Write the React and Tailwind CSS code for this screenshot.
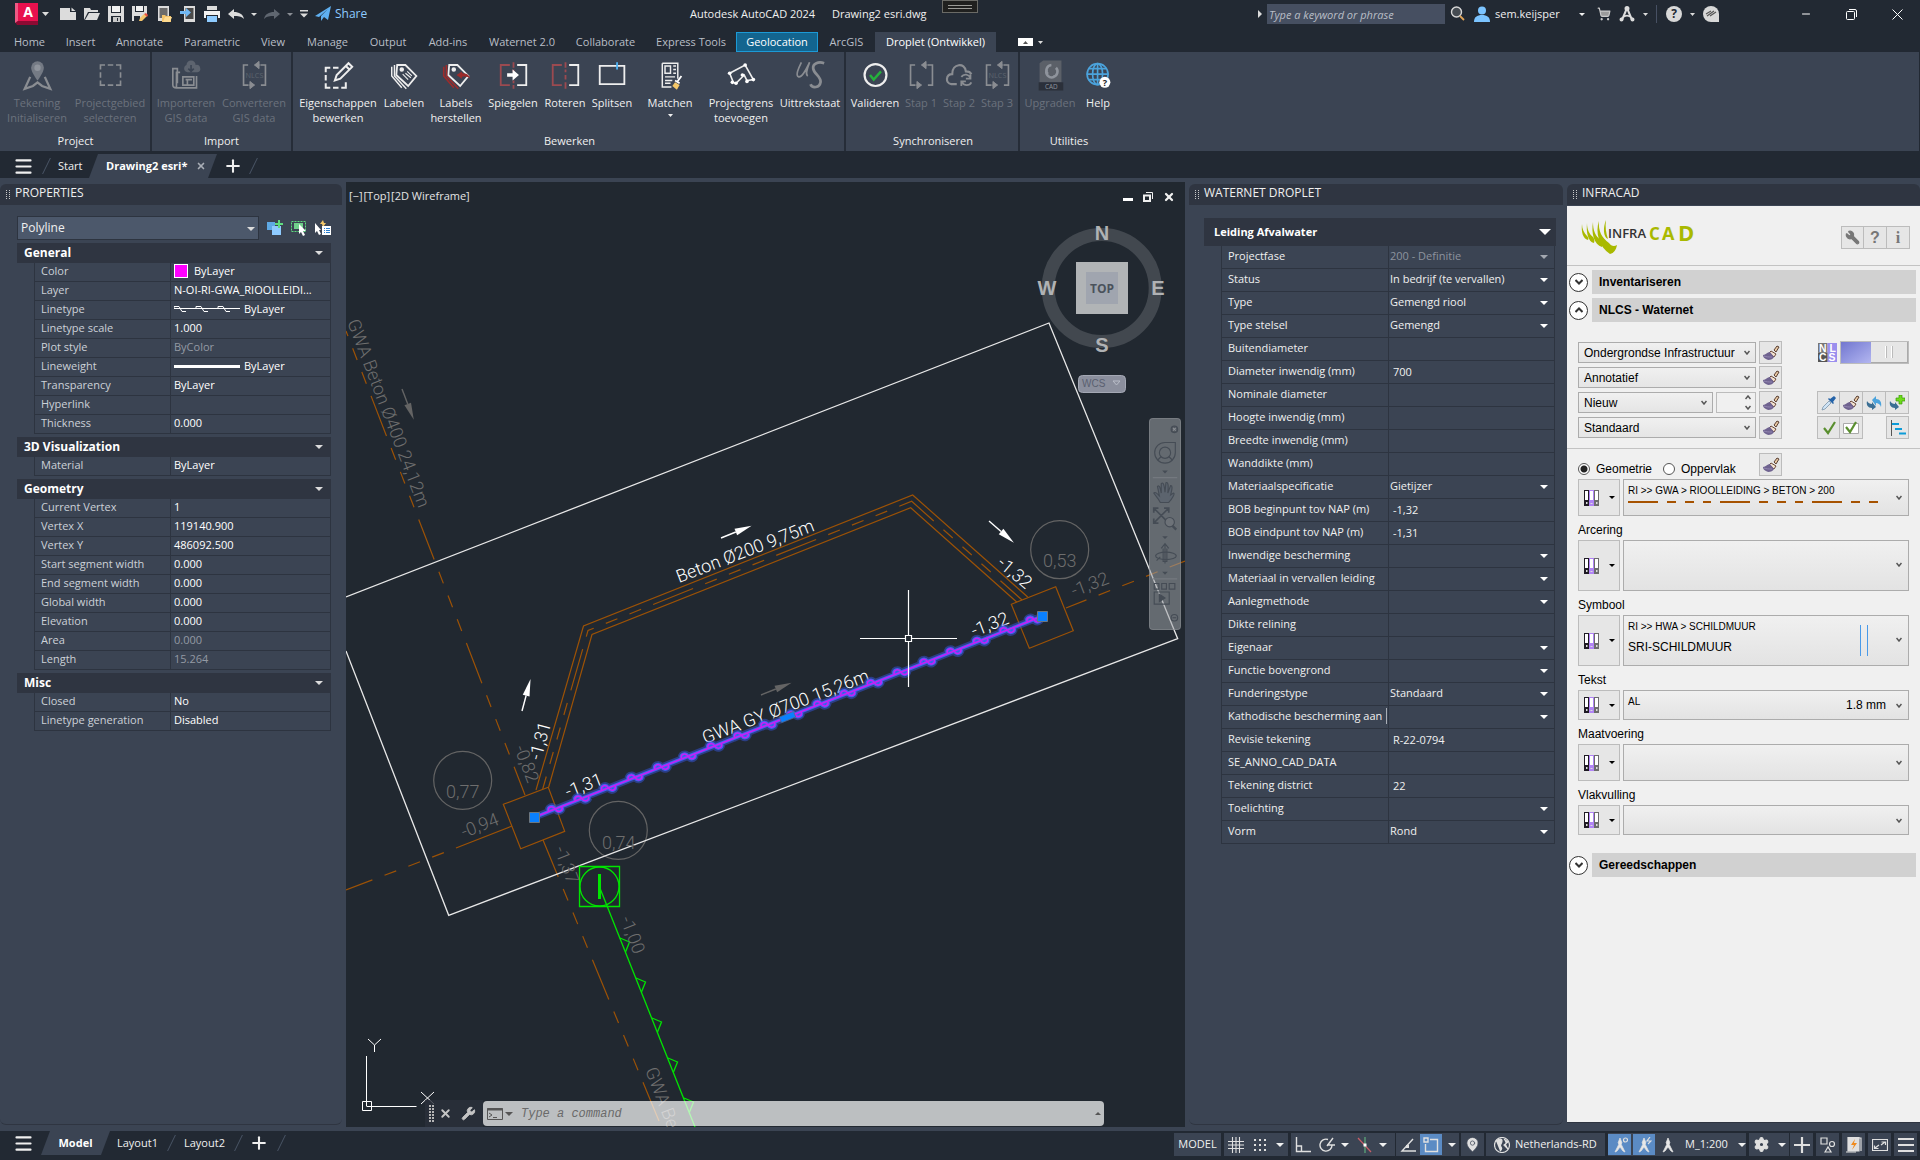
import { useState } from 'react'
import { Menu, Plus, X, Minus, Wrench, MapPin, Settings, ShoppingCart } from 'lucide-react'

const TABS = [
  { label: 'Home', w: 'w-[53px]' },
  { label: 'Insert', w: 'w-[49px]' },
  { label: 'Annotate', w: 'w-[69px]' },
  { label: 'Parametric', w: 'w-[76px]' },
  { label: 'View', w: 'w-[46px]' },
  { label: 'Manage', w: 'w-[63px]' },
  { label: 'Output', w: 'w-[58px]' },
  { label: 'Add-ins', w: 'w-[62px]' },
  { label: 'Waternet 2.0', w: 'w-[86px]' },
  { label: 'Collaborate', w: 'w-[81px]' },
  { label: 'Express Tools', w: 'w-[90px]' },
  { label: 'Geolocation', w: 'w-[82px]' },
  { label: 'ArcGIS', w: 'w-[57px]' },
  { label: 'Droplet (Ontwikkel)', w: 'w-[121px]' },
]

const PROPERTY_GROUPS = [
  {
    title: 'General',
    rows: [
      { name: 'Color', value: 'ByLayer', kind: 'color' },
      { name: 'Layer', value: 'N-OI-RI-GWA_RIOOLLEIDI...' },
      { name: 'Linetype', value: 'ByLayer', kind: 'linetype' },
      { name: 'Linetype scale', value: '1.000' },
      { name: 'Plot style', value: 'ByColor', muted: true },
      { name: 'Lineweight', value: 'ByLayer', kind: 'weight' },
      { name: 'Transparency', value: 'ByLayer' },
      { name: 'Hyperlink', value: '' },
      { name: 'Thickness', value: '0.000' },
    ],
  },
  { title: '3D Visualization', rows: [{ name: 'Material', value: 'ByLayer' }] },
  {
    title: 'Geometry',
    rows: [
      { name: 'Current Vertex', value: '1' },
      { name: 'Vertex X', value: '119140.900' },
      { name: 'Vertex Y', value: '486092.500' },
      { name: 'Start segment width', value: '0.000' },
      { name: 'End segment width', value: '0.000' },
      { name: 'Global width', value: '0.000' },
      { name: 'Elevation', value: '0.000' },
      { name: 'Area', value: '0.000', muted: true },
      { name: 'Length', value: '15.264', muted: true },
    ],
  },
  {
    title: 'Misc',
    rows: [
      { name: 'Closed', value: 'No' },
      { name: 'Linetype generation', value: 'Disabled' },
    ],
  },
]

const DROPLET_ROWS = [
  { name: 'Projectfase', value: '200 - Definitie', select: true, muted: true },
  { name: 'Status', value: 'In bedrijf (te vervallen)', select: true },
  { name: 'Type', value: 'Gemengd riool', select: true },
  { name: 'Type stelsel', value: 'Gemengd', select: true },
  { name: 'Buitendiameter', value: '' },
  { name: 'Diameter inwendig (mm)', value: '700' },
  { name: 'Nominale diameter', value: '' },
  { name: 'Hoogte inwendig (mm)', value: '' },
  { name: 'Breedte inwendig (mm)', value: '' },
  { name: 'Wanddikte (mm)', value: '' },
  { name: 'Materiaalspecificatie', value: 'Gietijzer', select: true },
  { name: 'BOB beginpunt tov NAP (m)', value: '-1,32' },
  { name: 'BOB eindpunt tov NAP (m)', value: '-1,31' },
  { name: 'Inwendige bescherming', value: '', select: true },
  { name: 'Materiaal in vervallen leiding', value: '', select: true },
  { name: 'Aanlegmethode', value: '', select: true },
  { name: 'Dikte relining', value: '' },
  { name: 'Eigenaar', value: '', select: true },
  { name: 'Functie bovengrond', value: '', select: true },
  { name: 'Funderingstype', value: 'Standaard', select: true },
  { name: 'Kathodische bescherming aan', value: '', select: true, cut: true },
  { name: 'Revisie tekening', value: 'R-22-0794' },
  { name: 'SE_ANNO_CAD_DATA', value: '' },
  { name: 'Tekening district', value: '22' },
  { name: 'Toelichting', value: '', select: true },
  { name: 'Vorm', value: 'Rond', select: true },
]

function Caret({ className = 'w-[7px] h-1' }) {
  return (
    <svg viewBox="0 0 8 4" preserveAspectRatio="none" className={`flex-shrink-0 ${className}`}>
      <path d="M0 0h8L4 4z" fill="currentColor" />
    </svg>
  )
}

function Slash() {
  return <span className="h-4 w-0 border-l border-[#4a5566] -skew-x-[26deg]" />
}

/* ---------- Title bar ---------- */

function QuickIcon({ label, children, className = 'w-6' }) {
  return (
    <button type="button" aria-label={label} className={`h-6 flex items-center justify-center ${className}`}>
      <svg viewBox="0 0 16 16" className="w-4 h-4" fill="#dcdcdc">{children}</svg>
    </button>
  )
}

function TitleBar() {
  return (
    <header className="h-8 flex items-center justify-between relative pb-1">
      <div className="flex items-center pl-[15px]">
        <button type="button" aria-label="Application menu" className="flex items-center">
          <svg viewBox="0 0 24 22" className="w-6 h-[22px]">
            <path d="M0 0h23v22H2l-2-3z" fill="#8d0a33" />
            <path d="M0 0h4v17l-4 3z" fill="#ee5a85" />
            <path d="M3 0h20v18H3z" fill="#e8114e" />
            <text x="13" y="14" textAnchor="middle" fontSize="14" fontWeight="700" fill="#fff" fontFamily="Open Sans, sans-serif">A</text>
          </svg>
          <Caret className="w-[7px] h-1 ml-[3px] text-[#dcdcdc]" />
        </button>
        <div className="flex items-center ml-[7px]">
          <QuickIcon label="New"><path d="M0 2h10v4h6v8H0z" /><path d="M11.500 1.500l4 3.500h-4z" /></QuickIcon>
          <QuickIcon label="Open"><path d="M0 14V2h6l1 2h7v2H4z" /><path d="M5 7h11l-3 7H1z" /></QuickIcon>
          <QuickIcon label="Save">
            <path d="M0 0h3v7h10V0h3v16H0z" /><path d="M4 0h8v6H4z" fill="#f2f2f2" />
            <path d="M3 10h10v6H3z" fill="#222933" /><path d="M5 11h7v5H5zM9 12v3h1v-3z" fill="#c8c8c8" />
          </QuickIcon>
          <QuickIcon label="Save as">
            <path d="M0 0h3v6h9V0h3v8l-8 7H0z" /><path d="M4 0h7v5H4z" fill="#f2f2f2" /><path d="M2 10h6v5H2z" fill="#222933" />
            <path d="M7 15l1-3 4-4 3 2-5 5z" fill="#f4c46a" /><path d="M12 8l2-1 2 2-1 2z" fill="#e7503f" />
          </QuickIcon>
          <QuickIcon label="Open from web">
            <path d="M2 0h11v15H2z" /><path d="M3.500 2h8v10h-8z" fill="#6b6b6b" />
            <path d="M6 9h3l1 1h5v6H6z" fill="#f4c46a" /><path d="M9 11h7l-2 5H7z" fill="#ffdb90" />
          </QuickIcon>
          <QuickIcon label="Save to web">
            <path d="M4 0h11v16H4z" /><path d="M5.500 2h8v11h-8z" fill="#4a4a4a" />
            <path d="M0 5h6V2l5 4.500L6 11V8H0z" fill="#71b9f5" />
          </QuickIcon>
          <QuickIcon label="Plot">
            <path d="M3 0h10v4H3z" /><path d="M0 5h16v7h-2V9H2v3H0z" fill="#f2f2f2" /><path d="M3 10h10v6H3z" fill="#8ecbff" />
          </QuickIcon>
          <QuickIcon label="Undo"><path d="M0 8l6-5v3c5 0 9 2 10 7-3-3-6-3-10-3v3z" /></QuickIcon>
          <Caret className="w-[6px] h-[3px] mx-[3px] text-[#dcdcdc]" />
          <QuickIcon label="Redo"><path d="M16 8l-6-5v3C5 6 1 8 0 13c3-3 6-3 10-3v3z" fill="#5f6670" /></QuickIcon>
          <Caret className="w-[6px] h-[3px] ml-[3px] text-[#8b8f96]" />
          <button type="button" aria-label="Customize" className="ml-[7px] mr-[7px]">
            <svg viewBox="0 0 8 8" className="w-2 h-2" fill="#dcdcdc"><path d="M0 0h8v1.500H0zM0 3.500h8l-4 4z" /></svg>
          </button>
          <button type="button" className="flex items-center gap-1 text-[12px] text-[#8ecbff]">
            <svg viewBox="0 0 16 16" className="w-4 h-4" fill="#5fb0f2"><path d="M0 10L16 0l-3 14-4-3-3 4v-5L13 3 4 11z" /></svg>
            Share
          </button>
        </div>
      </div>

      <div className="absolute left-[690px] top-0 flex h-7 items-center text-[#f0f0f0]">
        <span className="w-[142px]">Autodesk AutoCAD 2024</span>
        <span>Drawing2 esri.dwg</span>
      </div>
      <div className="absolute left-[942px] top-0 w-9 h-[13px] bg-[#20201f] border border-[#6a6a66] flex flex-col items-center justify-center gap-[2px]">
        <span className="w-6 h-px bg-[#9b9b97]" />
        <span className="w-6 h-px bg-[#9b9b97]" />
      </div>

      <div className="flex items-center">
        <svg viewBox="0 0 4 8" className="w-1 h-2 mr-[5px]"><path d="M0 0l4 4-4 4z" fill="#dcdcdc" /></svg>
        <input
          aria-label="Search"
          placeholder="Type a keyword or phrase"
          className="w-[178px] h-5 bg-[#464f61] px-[2px] italic placeholder:text-[#b9bec6] outline-none"
        />
        <svg viewBox="0 0 16 16" className="w-4 h-4 ml-[5px] mr-2" fill="none">
          <circle cx="6.500" cy="6" r="5" fill="#454b52" stroke="#d8d8d8" strokeWidth="1.400" />
          <path d="M10 10l4 4" stroke="#e0a458" strokeWidth="1.800" />
        </svg>
        <button type="button" className="flex items-center text-[#f0f0f0]">
          <svg viewBox="0 0 16 16" className="w-4 h-4 mr-[5px]" fill="#7cc4ff"><circle cx="8" cy="4.500" r="4" /><path d="M0 16c0-5 3-7 8-7s8 2 8 7z" /></svg>
          <span className="w-[84px] text-left">sem.keijsper</span>
          <Caret className="w-[6px] h-[3px]" />
        </button>
        <button type="button" aria-label="App store" className="ml-3 text-[#c9c9c9]"><ShoppingCart size={14} strokeWidth={2} fill="#9b9b9b" /></button>
        <button type="button" aria-label="Autodesk app" className="ml-2 flex items-center gap-2">
          <svg viewBox="0 0 16 16" className="w-4 h-4" fill="none" stroke="#dcdcdc" strokeWidth="2"><path d="M8 2l5 12M8 2L3 14M3 12c3-3 7-3 10 0" /><circle cx="8" cy="2.500" r="1.500" fill="#dcdcdc" /><circle cx="2.500" cy="13.500" r="1" fill="#dcdcdc" /><circle cx="13.500" cy="13.500" r="1" fill="#dcdcdc" /></svg>
          <Caret className="w-[5px] h-[3px] text-[#dcdcdc]" />
        </button>
        <span className="w-px h-[18px] bg-[#475063] ml-2 mr-[9px]" />
        <button type="button" aria-label="Help" className="flex items-center gap-2">
          <span className="w-4 h-4 rounded-full bg-[#d8d8d8] text-[#222933] font-bold text-[12px] leading-4">?</span>
          <Caret className="w-[5px] h-[3px] text-[#dcdcdc]" />
        </button>
        <svg viewBox="0 0 16 16" className="w-4 h-4 ml-2 mr-[81px]"><path d="M8 0a8 8 0 0 1 8 8v8H8A8 8 0 0 1 8 0z" fill="#d8d8d8" /><path d="M3 8l5-3M4 10l7-5M7 10l6-4" stroke="#555" strokeWidth="1.200" /></svg>
        <button type="button" aria-label="Minimize" className="w-[46px] h-6 flex items-center text-white"><Minus size={12} strokeWidth={2} /></button>
        <button type="button" aria-label="Restore" className="w-[46px] h-6 flex items-center text-white">
          <svg viewBox="0 0 11 11" className="w-[11px] h-[11px]" fill="none" stroke="#fff"><rect x=".5" y="2.500" width="8" height="8" rx="1" /><path d="M3 .5h6a1.500 1.500 0 0 1 1.500 1.500v6" /></svg>
        </button>
        <button type="button" aria-label="Close" className="w-7 h-6 flex items-center text-white">
          <svg viewBox="0 0 11 11" className="w-[11px] h-[11px]" stroke="#fff"><path d="M.5.5l10 10M10.500.5l-10 10" /></svg>
        </button>
      </div>
    </header>
  )
}

/* ---------- Ribbon ---------- */

function RibbonTabs() {
  const [active, setActive] = useState('Droplet (Ontwikkel)')
  return (
    <nav className="h-5 flex items-stretch pl-[3px]">
      {TABS.map(({ label, w }) => {
        let tone = 'text-[#b9bec6]'
        if (label === 'Geolocation') tone = 'bg-[#13658f] border border-[#1c9ad6] text-white'
        if (label === active) tone = 'bg-[#3b4453] text-white'
        return (
          <button key={label} type="button" onClick={() => setActive(label)} className={`text-center leading-[18px] whitespace-nowrap ${w} ${tone}`}>
            {label}
          </button>
        )
      })}
      <button type="button" aria-label="Minimize ribbon" className="flex items-center gap-[5px] ml-[22px] text-[#dcdcdc]">
        <span className="w-[15px] h-2 bg-white flex items-center justify-center text-[#555]"><Caret className="w-[5px] h-[3px] rotate-180" /></span>
        <Caret className="w-[5px] h-[3px]" />
      </button>
    </nav>
  )
}

const SWAP_ARROWS = (
  <>
    <path d="M9 4H4v22h5M23 26h5V4h-5" />
    <path d="M23 4h-7M21 0l-5 4 5 4zM9 26h7M11 22l5 4-5 4z" fill="currentColor" strokeWidth="1" />
  </>
)

const ICONS = {
  pin: (
    <>
      <path d="M16 0a7 7 0 0 1 7 7c0 5-7 14-7 14S9 12 9 7a7 7 0 0 1 7-7z" fill="#747a84" stroke="none" />
      <circle cx="16" cy="7" r="3.500" fill="#8f949c" stroke="none" />
      <path d="M8 17L2 30l9-3 5-4 5 4 9 3-6-13" strokeWidth="2.500" />
    </>
  ),
  dashed: <path d="M5 9V4h5M13 4h6M22 4h5v5M27 12v6M27 21v5h-5M19 26h-6M10 26H5v-5M5 18v-6" />,
  importGis: (
    <>
      <path d="M9 12H5v17h22V16M5 29c-3 0-4-1-4-3V8h5v16M12 17h12v9H12zM15 20h7M17 20v6" />
      <path d="M15 11a4 4 0 0 1 1-7 5 5 0 0 1 10 0 4 4 0 0 1 2 8H17z" fill="#5d646f" stroke="none" />
      <path d="M21 4v6M18 8l3 3 3-3" stroke="#3b4453" />
    </>
  ),
  convert: <>{SWAP_ARROWS}<text x="16" y="18" textAnchor="middle" fontSize="8" stroke="none" fill="#5d646f">NLCS</text></>,
  edit: (
    <>
      <path d="M2 12V7h5M10 7h6M2 15v6M2 24v5h5M10 29h6M19 29h5v-6" strokeWidth="2.200" />
      <path d="M12 21l2-6L27 2l4 4-13 13zM24 5l4 4" strokeWidth="2.200" />
    </>
  ),
  tag: (
    <>
      <path d="M8 4h9l12 12-9 11L7 15z" strokeWidth="2" /><path d="M5 4v12l13 14M2 6v10l11 13" strokeWidth="1.600" />
      <circle cx="13" cy="9" r="1.600" fill="currentColor" /><path d="M14 14l6 6M17 13l6 5M19 11l5 5" strokeWidth="1.200" />
    </>
  ),
  tagRestore: (
    <>
      <path d="M8 4h9l12 12-9 11L7 15z" strokeWidth="2" /><path d="M5 4v12l13 14M2 6v10l11 13" stroke="#9d2b2b" strokeWidth="1.800" />
      <circle cx="13" cy="9" r="1.600" fill="currentColor" /><path d="M16 15l6-4v2c4 0 8 1 9 6-2-2-5-3-9-2v2z" fill="#9d2b2b" stroke="none" />
    </>
  ),
  mirror: (
    <>
      <path d="M12 4H2v22h10M16 1v6M16 9v3M16 21v3M16 26v4" stroke="#9b4a50" strokeWidth="2" />
      <path d="M20 4h10v22H20" strokeWidth="2" /><path d="M9 13h6v-4l7 6-7 6v-4H9z" fill="#fff" stroke="none" />
    </>
  ),
  rotate: (
    <>
      <path d="M12 4H2v22h10M16 1v6M16 9v3M16 15v5M16 23v7" stroke="#9b4a50" strokeWidth="2" /><path d="M20 4h10v22H20" strokeWidth="2" />
    </>
  ),
  split: <><path d="M2 5h27v20H2z" strokeWidth="2" /><path d="M21 1v8" stroke="#4fb3f5" strokeWidth="2" /></>,
  match: (
    <>
      <path d="M7 2h17v17M7 2v26h10M10 5h6v8h-6zM19 5h3M19 9h3M19 13h3M10 17h11M10 21h8M10 24h6" strokeWidth="1.600" />
      <path d="M28 16l-5 7M21 21l5 3" stroke="#fff" strokeWidth="2" /><path d="M18 27l3-4 5 3-3 5z" fill="#f5c869" stroke="none" />
    </>
  ),
  border: (
    <>
      <path d="M3 13L20 4l9 16-7 1-3-6-9 9-3-1z" strokeWidth="1.800" />
      <g fill="#fff" stroke="none"><circle cx="3" cy="13" r="2" /><circle cx="20" cy="4" r="2" /><circle cx="29" cy="20" r="2" /><circle cx="22" cy="22" r="2" /><circle cx="17" cy="15" r="2" /><circle cx="10" cy="24" r="2" /><circle cx="6" cy="23" r="2" /></g>
    </>
  ),
  us: (
    <g strokeWidth="2.400">
      <path d="M6 1c-3 6-7 15-3 16s8-8 12-16c-3 8-5 13-2 15" strokeWidth="1.800" />
      <path d="M31 2c-6-2-13 0-12 6s9 9 8 15-9 7-11 2" strokeWidth="3" />
    </g>
  ),
  check: <><circle cx="16" cy="15" r="12" strokeWidth="2.400" /><path d="M10 15l4 5 8-9" stroke="#25b13c" strokeWidth="2.600" /></>,
  swap: SWAP_ARROWS,
  cloud: (
    <>
      <path d="M13 25H7c-7-1-6-11 1-11C8 2 22 1 23 11c3 0 5 1 6 3" strokeWidth="2.400" />
      <path d="M18 17c3-4 8-3 10 1M28 14v5h-5M29 23c-2 4-8 4-10 0M18 27v-5h5" strokeWidth="2" />
    </>
  ),
  cad: (
    <>
      <path d="M4 2l4-3h20v24H4z" fill="#5b6068" stroke="none" /><path d="M3 23h27v9H3z" fill="#2b303a" stroke="none" />
      <path d="M13 14a6 6 0 0 1 4-10M22 7a6 6 0 0 1-3 10M12 9a6 6 0 0 0 8 8" stroke="#8f949c" strokeWidth="2.800" />
      <text x="17" y="30" textAnchor="middle" fontSize="7" stroke="none" fill="#8f949c">CAD</text>
    </>
  ),
  globe: (
    <>
      <g stroke="#4ba3dc" strokeWidth="1.800"><circle cx="15" cy="14" r="11.500" /><ellipse cx="15" cy="14" rx="5.500" ry="11.500" /><path d="M15 2v24M3 14h24M5 8h20M5 20h20" /></g>
      <circle cx="23" cy="23" r="6" fill="#fff" stroke="none" /><text x="23" y="27" textAnchor="middle" fontSize="10" fontWeight="700" stroke="none" fill="#222">?</text>
    </>
  ),
}

const RIBBON_PANELS = [
  {
    title: 'Project', w: 'w-[152px] pl-px',
    items: [
      { icon: 'pin', lines: ['Tekening', 'Initialiseren'], w: 'w-[72px]', off: true },
      { icon: 'dashed', lines: ['Projectgebied', 'selecteren'], w: 'w-[74px]', off: true },
    ],
  },
  {
    title: 'Import', w: 'w-[141px]',
    items: [
      { icon: 'importGis', lines: ['Importeren', 'GIS data'], w: 'w-[68px]', off: true },
      { icon: 'convert', lines: ['Converteren', 'GIS data'], w: 'w-[68px]', off: true },
    ],
  },
  {
    title: 'Bewerken', w: 'w-[553px] pl-[2px]',
    items: [
      { icon: 'edit', lines: ['Eigenschappen', 'bewerken'], w: 'w-[86px]' },
      { icon: 'tag', lines: ['Labelen'], w: 'w-[46px]' },
      { icon: 'tagRestore', lines: ['Labels', 'herstellen'], w: 'w-[58px]' },
      { icon: 'mirror', lines: ['Spiegelen'], w: 'w-[56px]' },
      { icon: 'rotate', lines: ['Roteren'], w: 'w-[48px]' },
      { icon: 'split', lines: ['Splitsen'], w: 'w-[46px]' },
      { icon: 'match', lines: ['Matchen'], w: 'w-[70px]', menu: true },
      { icon: 'border', lines: ['Projectgrens', 'toevoegen'], w: 'w-[72px]' },
      { icon: 'us', lines: ['Uittrekstaat'], w: 'w-[66px]', grey: true },
    ],
  },
  {
    title: 'Synchroniseren', w: 'w-[174px] pl-[2px]',
    items: [
      { icon: 'check', lines: ['Valideren'], w: 'w-[54px]' },
      { icon: 'swap', lines: ['Stap 1'], w: 'w-[38px]', off: true },
      { icon: 'cloud', lines: ['Stap 2'], w: 'w-[38px]', off: true },
      { icon: 'convert', lines: ['Stap 3'], w: 'w-[38px]', off: true },
    ],
  },
  {
    title: 'Utilities', w: 'w-[98px]',
    items: [
      { icon: 'cad', lines: ['Upgraden'], w: 'w-[60px]', off: true },
      { icon: 'globe', lines: ['Help'], w: 'w-9' },
    ],
  },
]

function Ribbon() {
  return (
    <div className="h-[99px] bg-[#3b4453] flex mr-px">
      {RIBBON_PANELS.map((panel, i) => (
        <section key={panel.title} className={`flex flex-col ${panel.w} ${i < 4 ? 'border-r-2 border-[#262d38]' : ''}`}>
          <div className="flex pt-2 h-20">
            {panel.items.map((item) => (
              <button
                key={item.lines[0]}
                type="button"
                disabled={item.off}
                className={`flex flex-col items-center flex-shrink-0 whitespace-nowrap leading-[15px] ${item.w} ${item.off ? 'text-[#6b727d]' : 'text-[#f0f0f0]'}`}
              >
                <svg viewBox="-1 -1 34 33" className={`w-[31px] h-[31px] mb-1 flex-shrink-0 overflow-visible ${item.off || item.grey ? 'text-[#8a8d92]' : 'text-[#eeeeee]'}`} fill="none" stroke="currentColor" strokeWidth="1.800">
                  {ICONS[item.icon]}
                </svg>
                {item.lines.map((line) => <span key={line}>{line}</span>)}
                {item.menu && <Caret className="w-[5px] h-[3px] mt-1" />}
              </button>
            ))}
          </div>
          <h2 className="text-center leading-[18px] text-[#f0f0f0]">{panel.title}</h2>
        </section>
      ))}
    </div>
  )
}

function FileTabs() {
  return (
    <div className="h-[27px] flex items-center pt-[3px] text-[#f0f0f0]">
      <button type="button" aria-label="Menu" className="ml-[13px]"><Menu size={21} strokeWidth={2.500} /></button>
      <span className="ml-3 flex"><Slash /></span>
      <a href="#start" className="ml-[11px] w-[31px]">Start</a>
      <div className="h-6 w-[128px] bg-[#3b4453] flex items-center pl-[17px] [clip-path:polygon(9px_0,100%_0,calc(100%_-_9px)_100%,0_100%)]">
        <span className="font-bold text-white w-[90px] whitespace-nowrap">Drawing2 esri*</span>
        <button type="button" aria-label="Close tab" className="text-[#a9aeb6]"><X size={10} strokeWidth={4} /></button>
      </div>
      <button type="button" aria-label="New drawing" className="ml-[6px]"><Plus size={20} strokeWidth={2.500} /></button>
      <span className="ml-[10px] flex"><Slash /></span>
    </div>
  )
}

/* ---------- Palettes ---------- */

function PaletteTitle({ children }) {
  return (
    <h2 className="h-[21px] bg-[#2f3541] rounded-t-md flex items-center gap-[5px] pl-[6px] pb-[3px] text-[#f0f0f0] text-[12px]">
      <svg viewBox="0 0 4 10" className="w-1 h-[10px] mt-1" fill="#c9c9c9">
        {[0, 2, 4, 6, 8].map((y) => <path key={y} d={`M0 ${y}h1v1H0zM3 ${y}h1v1H3z`} />)}
      </svg>
      {children}
    </h2>
  )
}

function PropertyValue({ row }) {
  if (row.kind === 'color') {
    return (
      <span className="flex items-center gap-[6px]">
        <span className="w-[14px] h-[14px] bg-[#ff00ff] border border-white" />
        {row.value}
      </span>
    )
  }
  if (row.kind === 'linetype') {
    return (
      <span className="flex items-center gap-1">
        <svg viewBox="0 0 66 8" className="w-[66px] h-2" fill="none" stroke="#fff">
          <path d="M0 3.500h66" />
          {[0, 22, 44].map((x) => <path key={x} d={`M${x} 3v-1.500h5l3 5h4`} />)}
        </svg>
        {row.value}
      </span>
    )
  }
  if (row.kind === 'weight') {
    return <span className="flex items-center gap-1"><span className="w-[66px] h-[3px] bg-white" />{row.value}</span>
  }
  return row.value
}

function PropertiesPalette() {
  return (
    <aside className="w-[342px] flex-shrink-0 pt-[6px] pb-[6px] flex flex-col">
      <PaletteTitle>PROPERTIES</PaletteTitle>
      <div className="flex-1 pl-[17px] pr-[11px] pt-[11px] border-b border-[#2f3541] rounded-b-md">
        <div className="flex items-center h-6 mb-[3px]">
          <div className="relative w-[242px] h-6">
            <select aria-label="Object type" className="appearance-none w-full h-full bg-[#4c586b] border border-[#2d3440] pl-[3px] text-[#f0f0f0] text-[12px]">
              <option>Polyline</option>
            </select>
            <Caret className="w-2 h-1 absolute right-1 top-[11px] text-[#dcdcdc] pointer-events-none" />
          </div>
          <button type="button" aria-label="Toggle PICKADD" className="ml-2">
            <svg viewBox="0 0 16 16" className="w-4 h-4"><path d="M0 2h8v8H0z" fill="#5ea9e4" /><path d="M5 6h9v9H5z" fill="#8ecbff" /><path d="M11 0h2v3h3v2h-3v3h-2V5H8V3h3z" fill="#5fdc7f" /></svg>
          </button>
          <button type="button" aria-label="Select objects" className="ml-2">
            <svg viewBox="0 0 16 16" className="w-4 h-4"><path d="M.5 1.500h14v10H.5z" fill="none" stroke="#5fdc7f" strokeDasharray="2 1" /><path d="M3 3h9v6H3z" fill="#6fd08a" /><path d="M8 4l7 7h-3l2 4-2 1-2-4-2 2z" fill="#fff" /></svg>
          </button>
          <button type="button" aria-label="Quick select" className="ml-2">
            <svg viewBox="0 0 16 16" className="w-4 h-4"><path d="M0 3l6 7H4l2 4-2 1-2-4-2 2z" fill="#fff" /><path d="M8 0l1 3 2 0-3 4-1-3H5z" fill="#f5c869" /><path d="M7 6h9v9H7z" fill="#fff" /><path d="M9 8.500h1M11 8.500h4M9 10.500h1M11 10.500h4M9 12.500h1M11 12.500h4" stroke="#2b7fd0" /></svg>
          </button>
        </div>

        {PROPERTY_GROUPS.map((group) => (
          <section key={group.title} className="mb-[3px]">
            <button type="button" className="w-full h-5 bg-[#2f3541] flex items-center justify-between pl-[7px] pr-2 font-bold text-white text-[12px]">
              {group.title}
              <Caret className="w-2 h-1 text-[#dcdcdc]" />
            </button>
            <table className="w-[297px] ml-[17px] border-separate border-spacing-0 table-fixed border-l border-[#2d3440]">
              <tbody>
                {group.rows.map((row) => (
                  <tr key={row.name} className="h-[19px] leading-4">
                    <th scope="row" className="w-[136px] border-r border-b border-[#2d3440] p-0 pl-[6px] pb-[2px] text-left font-normal text-[#ccd1d8] whitespace-nowrap">{row.name}</th>
                    <td className={`border-r border-b border-[#2d3440] p-0 pl-[3px] pb-[2px] whitespace-nowrap overflow-hidden ${row.muted ? 'text-[#949aa4]' : 'text-white'}`}><PropertyValue row={row} /></td>
                  </tr>
                ))}
              </tbody>
            </table>
          </section>
        ))}
      </div>
    </aside>
  )
}

function DropletPalette() {
  return (
    <aside className="w-[374px] flex-shrink-0 ml-1 pt-[6px] pb-[6px] flex flex-col">
      <PaletteTitle>WATERNET DROPLET</PaletteTitle>
      <div className="flex-1 pt-[13px] pl-[15px] pr-[7px] border-b border-[#2f3541] rounded-b-md">
        <button type="button" className="w-full h-7 bg-[#2f3541] flex items-center justify-between pl-[10px] pr-[5px] font-bold text-white">
          Leiding Afvalwater
          <Caret className="w-3 h-[6px]" />
        </button>
        <table className="w-[334px] ml-[17px] border-separate border-spacing-0 table-fixed border-l border-[#2d3440]">
          <tbody>
            {DROPLET_ROWS.map((row, i) => (
              <tr key={row.name} className="h-[23px] leading-4">
                <th scope="row" className="w-[167px] border-r border-b border-[#2d3440] p-0 pl-[6px] pb-[2px] text-left font-normal text-[#f0f0f0] whitespace-nowrap">
                  <label htmlFor={`droplet-${i}`} className={row.cut ? 'block overflow-hidden w-[159px] border-r border-[#a9aeb6]' : ''}>{row.name}</label>
                </th>
                <td className="border-r border-b border-[#2d3440] p-0 pb-[2px]">
                  {row.select ? (
                    <div className="relative">
                      <select id={`droplet-${i}`} disabled={row.muted} className={`appearance-none block w-full h-5 bg-transparent pl-px opacity-100 ${row.muted ? 'text-[#8d939e]' : 'text-[#f0f0f0]'}`}>
                        <option>{row.value}</option>
                      </select>
                      <Caret className={`w-2 h-1 absolute right-[6px] top-[9px] pointer-events-none ${row.muted ? 'text-[#a3a8b0]' : 'text-white'}`} />
                    </div>
                  ) : (
                    <input id={`droplet-${i}`} defaultValue={row.value} className="block w-full h-5 bg-transparent pl-1 text-[#f0f0f0] outline-none" />
                  )}
                </td>
              </tr>
            ))}
          </tbody>
        </table>
      </div>
    </aside>
  )
}

/* ---------- InfraCAD palette ---------- */

function Brush() {
  return (
    <svg viewBox="0 0 18 16" className="w-[18px] h-4">
      <path d="M12 5l3-4 2 1-3 5z" fill="#e9c9a4" stroke="#5a4034" />
      <path d="M9 6l5 3-2 3-5-4z" fill="#f3e2cf" stroke="#6b4a3b" />
      <path d="M8 7l4 5c-1 2-3 3-6 3-2-1-5-2-5-5 3 0 4-3 7-3z" fill="#6f6390" />
      <path d="M2 11c2 1 5 1 8 1" stroke="#9488b3" fill="none" />
    </svg>
  )
}

function ToolButton({ label, children, className = '' }) {
  return (
    <button type="button" aria-label={label} className={`w-[23px] h-[23px] flex-shrink-0 bg-[#e6e6e6] border border-[#bcbcbc] flex items-center justify-center ${className}`}>
      {children}
    </button>
  )
}

function Chevron({ className = '' }) {
  return (
    <svg viewBox="0 0 6 5" className={`w-[6px] h-[5px] pointer-events-none ${className}`} fill="none" stroke="#555" strokeWidth="1.500">
      <path d="M.5 1L3 4l2.500-3" />
    </svg>
  )
}

function Combo({ label, value, className = 'w-[178px]' }) {
  return (
    <div className={`relative h-[21px] flex-shrink-0 ${className}`}>
      <select aria-label={label} className="appearance-none w-full h-full border border-[#acacac] bg-linear-to-b from-[#f0f0f0] to-[#e5e5e5] pl-[5px] pr-5 text-black text-[12px]">
        <option>{value}</option>
      </select>
      <Chevron className="absolute right-[6px] top-2" />
    </div>
  )
}

function SectionBar({ title, open }) {
  return (
    <div className="flex items-center gap-1 pl-[2px] pr-1 mb-1">
      <button type="button" aria-label={title} className="w-[19px] h-[19px] rounded-full bg-white border-[1px] border-[#333] flex items-center justify-center">
        <svg viewBox="0 0 8 6" className={`w-2 h-[6px] ${open ? 'rotate-180' : ''}`} fill="none" stroke="#333" strokeWidth="2"><path d="M.5 1L4 4.500 7.500 1" /></svg>
      </button>
      <h3 className="flex-1 h-6 leading-6 bg-[#d1d1d1] pl-[7px] font-bold text-[12px]">{title}</h3>
    </div>
  )
}

function LibraryRow({ title, h, children }) {
  return (
    <div>
      {title && <h4 className="h-6 leading-7 text-[12px]">{title}</h4>}
      <div className={`flex gap-[3px] ${h}`}>
        <button type="button" aria-label={`${title || 'Geometrie'} bibliotheek`} className="w-[42px] border border-[#bcbcbc] bg-[#e6e6e6] flex items-center justify-center gap-[9px]">
          <svg viewBox="0 0 16 16" className="w-4 h-4">
            <path d="M0 0h5v16H0z" fill="#1f1a24" /><path d="M5 0h5v16H5z" fill="#b184f5" /><path d="M10 0h5v16h-5z" fill="#6c6c6c" />
            <path d="M1 1h3v9H1zM6 1h3v9H6zM11 1h3v9h-3z" fill="#fff" />
            <path d="M2 12h1.500v2H2zM6.500 13h2v1h-2zM12 12h1.500v2H12z" fill="#ddd" />
          </svg>
          <Caret className="w-[6px] h-[3px] text-black" />
        </button>
        <button type="button" aria-label={title || 'Geometrie'} className="flex-1 relative border border-[#acacac] bg-linear-to-b from-[#f0f0f0] to-[#e3e3e3] text-left pl-1">
          {children}
          <Chevron className="absolute right-[6px] top-[42%]" />
        </button>
      </div>
    </div>
  )
}

function InfraLogo() {
  return (
    <svg viewBox="0 0 120 38" className="w-[120px] h-[38px]" role="img" aria-label="InfraCAD">
      <g fill="#a9b900">
        <path d="M1 4c-1 8 1 15 6 16 1-2 0-3-1-4C3 13 1 9 1 4z" />
        <path d="M6 3c-1 9 1 19 7 20 1-3 0-4-1-6C8 14 6 9 6 3z" />
        <path d="M12 2c-2 11 1 23 9 25 2-3 0-5-1-7C14 16 12 10 12 2z" />
        <path d="M18 1c-4 11 0 26 11 33 4-1 6-4 7-9-3 2-6 1-8-2C21 18 17 11 18 1z" />
        <path d="M25 0c-3 7-3 17 2 19-2-6-3-12-2-19z" />
      </g>
      <text x="27" y="18" fontSize="13" fontFamily="Open Sans, sans-serif" fontWeight="600" fill="#333">INFRA</text>
      <g fontFamily="Open Sans, sans-serif" fontWeight="700" fill="#a9b900">
        <text x="68" y="20" fontSize="17">C</text><text x="81" y="20" fontSize="18">A</text><text x="97" y="21" fontSize="22">D</text>
      </g>
    </svg>
  )
}

function InfraCadPalette() {
  const [mode, setMode] = useState('Geometrie')
  return (
    <aside className="w-[353px] flex-shrink-0 ml-1 pt-[6px] pb-2 flex flex-col">
      <PaletteTitle>INFRACAD</PaletteTitle>
      <div className="flex-1 bg-[#f0f0f0] mt-px text-black border-b border-[#2f3541] font-['Liberation_Sans',Arial,sans-serif]">
        <div className="h-[60px] border-b border-[#c3c3c3] flex items-start justify-between pl-[14px] pr-[10px]">
          <div className="pt-[14px]"><InfraLogo /></div>
          <div className="flex pt-5 text-[#777]">
            <ToolButton label="Instellingen"><Wrench size={15} fill="#777" className="-scale-x-100" /></ToolButton>
            <ToolButton label="Help" className="border-l-0 font-bold text-[16px]">?</ToolButton>
            <ToolButton label="Info" className="border-l-0 font-bold text-[16px] font-['Liberation_Serif',serif]">i</ToolButton>
          </div>
        </div>

        <div className="pt-1">
          <SectionBar title="Inventariseren" />
          <SectionBar title="NLCS - Waternet" open />
        </div>

        <div className="pt-[15px] px-[11px] pb-[9px] flex flex-col gap-[2px] border-b border-[#c3c3c3]">
          <div className="flex items-center gap-[3px]">
            <Combo label="Discipline" value="Ondergrondse Infrastructuur" />
            <ToolButton label="Toepassen"><Brush /></ToolButton>
            <svg viewBox="0 0 20 20" className="w-[19px] h-[19px] ml-auto">
              <path d="M0 0h10v10H0z" fill="#777" /><path d="M10 0h10v20H10z" fill="#9a8fee" /><path d="M0 10h10v10H0z" fill="#555" />
              <g fontSize="11" fontWeight="700" fill="#fff"><text x="1" y="9">N</text><text x="12" y="9">L</text><text x="1" y="19">C</text><text x="11" y="19">S</text></g>
            </svg>
            <button type="button" aria-label="NLCS schakelaar" className="w-[69px] h-[23px] border border-[#bcbcbc] flex">
              <span className="w-[30px] bg-linear-to-br from-[#7276cf] to-[#b3b6f0]" />
              <span className="flex-1 bg-[#e6e6e6] border-r border-b border-[#aaa] flex items-center justify-center gap-1">
                <span className="w-[2px] h-3 bg-white border-r border-[#bbb]" />
                <span className="w-[2px] h-3 bg-white border-r border-[#bbb]" />
              </span>
            </button>
          </div>
          <div className="flex items-center gap-[3px]">
            <Combo label="Schaling" value="Annotatief" />
            <ToolButton label="Toepassen"><Brush /></ToolButton>
          </div>
          <div className="flex items-center gap-[3px]">
            <Combo label="Status" value="Nieuw" className="w-[135px]" />
            <div className="relative w-10 h-[21px]">
              <input aria-label="Nummer" className="w-full h-full bg-[#f0f0f0] border border-[#bcbcbc] pl-1 text-[12px]" />
              <span className="absolute right-[5px] top-[3px] h-[15px] flex flex-col justify-between">
                <Chevron className="rotate-180" />
                <Chevron />
              </span>
            </div>
            <ToolButton label="Toepassen"><Brush /></ToolButton>
            <div className="flex ml-auto w-[92px]">
              <ToolButton label="Pipet"><svg viewBox="0 0 16 16" className="w-4 h-4"><path d="M1 15l1-3 6-6 2 2-6 6z" fill="#cfe3f5" stroke="#7a93a8" strokeWidth=".8" /><path d="M7 4l5 5 1-1-1-1 3-4-2-2-4 3-1-1z" fill="#2563a8" /></svg></ToolButton>
              <ToolButton label="Kwast" className="border-l-0"><Brush /></ToolButton>
              <ToolButton label="Vernieuwen" className="border-l-0"><svg viewBox="0 0 16 16" className="w-4 h-4"><path d="M6 5l4-4v3c4 0 6 3 5 8-1-3-3-4-5-4v3z" fill="#4ba3dc" /><path d="M10 12l-4 3v-2c-4 0-6-3-5-7 1 2 3 3 5 3V7z" fill="#3b6f94" /></svg></ToolButton>
              <ToolButton label="Toevoegen" className="border-l-0"><svg viewBox="0 0 16 16" className="w-4 h-4"><path d="M10 12l-4 3v-2c-4 0-6-3-5-7 1 2 3 3 5 3V7z" fill="#3b6f94" /><path d="M10 0h3v3h3v3h-3v3h-3V6H7V3h3z" fill="#6fdc1d" stroke="#3b9a0a" strokeWidth=".7" /></svg></ToolButton>
            </div>
          </div>
          <div className="flex items-center gap-[3px]">
            <Combo label="Stijl" value="Standaard" />
            <ToolButton label="Toepassen"><Brush /></ToolButton>
            <div className="flex ml-auto w-[92px]">
              <ToolButton label="Controle"><svg viewBox="0 0 16 16" className="w-4 h-4"><path d="M3 8l4 5 7-11" fill="none" stroke="#5a8f2f" strokeWidth="2.200" /></svg></ToolButton>
              <ToolButton label="Controle selectie" className="border-l-0"><svg viewBox="0 0 16 16" className="w-4 h-4"><path d="M.5 3.500h15v10H.5z" fill="#fff" stroke="#aaa" /><path d="M3 7l4 5 6-10" fill="none" stroke="#5a8f2f" strokeWidth="2.200" /></svg></ToolButton>
              <ToolButton label="Structuur" className="ml-auto"><svg viewBox="0 0 16 16" className="w-4 h-4"><path d="M1.500 0v16" stroke="#555" /><path d="M2 4h7M5 9h7M9 13.500h7" stroke="#0c9bd8" strokeWidth="2" /></svg></ToolButton>
            </div>
          </div>
        </div>

        <div className="px-[11px]">
          <div className="flex items-center h-[30px] pt-1 pb-[3px] text-[12px]">
            {['Geometrie', 'Oppervlak'].map((name) => (
              <label key={name} className="flex items-center w-[85px] gap-[6px] pt-2">
                <input
                  type="radio"
                  name="mode"
                  checked={mode === name}
                  onChange={() => setMode(name)}
                  className="appearance-none w-3 h-3 m-0 rounded-full border border-[#555] bg-white checked:bg-[radial-gradient(circle,#222_0_3px,#fff_4px)]"
                />
                {name}
              </label>
            ))}
            <ToolButton label="Toepassen" className="ml-[11px]"><Brush /></ToolButton>
          </div>

          <LibraryRow h="h-[37px]">
            <span className="absolute left-1 top-[5px] text-[10px] leading-3">RI &gt;&gt; GWA &gt; RIOOLLEIDING &gt; BETON &gt; 200</span>
            <svg viewBox="0 0 252 2" className="absolute left-1 top-[21px] w-[252px] h-[2px]"><path d="M0 1h252" stroke="#a65200" strokeWidth="2" strokeDasharray="30 9 9 9 9 9 8 9" /></svg>
          </LibraryRow>
          <LibraryRow title="Arcering" h="h-[51px]" />
          <LibraryRow title="Symbool" h="h-[51px]">
            <span className="absolute left-1 top-[5px] text-[10px] leading-3">RI &gt;&gt; HWA &gt; SCHILDMUUR</span>
            <span className="absolute left-1 top-[23px] text-[12px] leading-4">SRI-SCHILDMUUR</span>
            <span className="absolute right-10 top-[9px] w-2 h-[31px] border-x border-[#4a9ae8]" />
          </LibraryRow>
          <LibraryRow title="Tekst" h="h-[30px]">
            <span className="absolute left-1 top-[5px] text-[10px] leading-3">AL</span>
            <span className="absolute right-[22px] top-[6px] text-[12px] leading-4">1.8 mm</span>
          </LibraryRow>
          <LibraryRow title="Maatvoering" h="h-[37px]" />
          <LibraryRow title="Vlakvulling" h="h-[30px]" />
        </div>

        <div className="pt-[18px]">
          <SectionBar title="Gereedschappen" />
        </div>
      </div>
    </aside>
  )
}

/* ---------- Drawing ---------- */

const SHEET_TEXT = [
  { t: 'GWA Beton Ø400 24,12m', x: 347, y: 322, a: 69, dim: true },
  { t: 'Beton Ø200 9,75m', x: 679, y: 583, a: -21 },
  { t: 'GWA GY Ø700 15,26m', x: 705, y: 744, a: -21 },
  { t: '-1,32', x: 974, y: 637, a: -21 },
  { t: '-1,31', x: 568, y: 798, a: -21 },
  { t: '-1,31', x: 541, y: 761, a: -75 },
  { t: '-1,32', x: 996, y: 565, a: 40 },
  { t: '-1,32', x: 1074, y: 597, a: -21, dim: true },
  { t: '-0,82', x: 514, y: 748, a: 69, dim: true },
  { t: '-0,94', x: 464, y: 838, a: -21, dim: true },
  { t: '-1,37', x: 554, y: 849, a: 69, dim: true },
  { t: '-1,00', x: 620, y: 919, a: 69, dim: true },
  { t: 'GWA Be', x: 645, y: 1070, a: 69, dim: true },
  { t: '0,77', x: 446, y: 798, a: 0, dim: true },
  { t: '0,74', x: 602, y: 849, a: 0, dim: true },
  { t: '0,53', x: 1043, y: 567, a: 0, dim: true },
]

const ARROWS = [
  { x: 721, y: 538, a: -22 },
  { x: 522, y: 711, a: -75 },
  { x: 989, y: 521, a: 41 },
  { x: 761, y: 695, a: -22, dim: true },
  { x: 402, y: 389, a: 69, dim: true },
]

const DASH = '43 13 12.500 13 12.500 13 12.500 13'

function Drawing() {
  const waves = Array.from({ length: 19 }, (_, i) => {
    const x = 22.500 + i * 28.600
    return `M${x - 7} 0c0-5 6-5 7 0s7 5 7 0`
  })
  return (
    <svg viewBox="346 182 839 945" preserveAspectRatio="xMinYMin slice" className="absolute inset-0 w-full h-full" fill="none">
      <g stroke="#9c5206" strokeWidth="1.200">
        <path d="M346 331L525 795" strokeDasharray={DASH} strokeDashoffset="63" />
        <path d="M512 826L456 848" />
        <path d="M456 848L346 890" strokeDasharray={DASH} strokeDashoffset="43" />
        <path d="M543 840L659 1121" strokeDasharray={DASH} strokeDashoffset="3" />
        <path d="M1066 608L1185 561" strokeDasharray={DASH} strokeDashoffset="21" />
        <path d="M536 790L583.500 626L912.700 495L1027.700 597M548.700 787L592 634.500L910.700 507.700L1016.700 602" />
        <path d="M542.700 789L588 630.500L911.700 501.300L1022 600" strokeDasharray={DASH} strokeDashoffset="30" />
        <path d="M503.300 804.300L548.300 787.300L564.700 831.300L520.700 848.700zM1011.300 604.300L1055.700 586.700L1073.300 630.700L1029.300 648.300z" />
      </g>

      <g stroke="#646464" strokeWidth="1.200">
        <circle cx="462.700" cy="780.300" r="29" />
        <circle cx="618.300" cy="830.300" r="29" />
        <circle cx="1059.700" cy="549.700" r="29" />
      </g>

      <path d="M346 651L448.700 915.300L1177.700 638.700L1049 323L346 597" stroke="#e8e8e8" strokeWidth="1.300" />

      <g stroke="#00e600" strokeWidth="1.300">
        <path d="M579.500 866.500h40v40h-40z" /><circle cx="599.500" cy="886.500" r="19.500" />
        <path d="M599.500 874v25" strokeWidth="3" />
        <path d="M599.500 887L695 1127" />
        {[0, 1, 2, 3, 4].map((i) => <path key={i} d={`M${620 + i * 16} ${938 + i * 40}l9.500 4l-4 10`} />)}
      </g>

      <g fontFamily="Roboto, sans-serif" fontWeight="300" fontSize="18">
        {SHEET_TEXT.map((s) => (
          <text key={`${s.x}-${s.y}`} transform={`translate(${s.x} ${s.y}) rotate(${s.a})`} fill={s.dim ? '#6e6e6e' : '#fff'}>{s.t}</text>
        ))}
      </g>

      <g transform="translate(534.300 817.300) rotate(-21.600)" strokeLinecap="round">
        <g stroke="#3654d8" strokeWidth="7" opacity=".5">
          <path d={`M0 0H546${waves.join('')}`} />
        </g>
        <path d={`M0 0H546${waves.join('')}`} stroke="#3f62f2" strokeWidth="3.500" />
        <path d={`M0 0H546${waves.join('')}`} stroke="#c91ff5" strokeWidth="1.500" />
        <path d="M265 -3h15v6h-15z" fill="#0a80ff" stroke="#5a6a78" strokeWidth=".6" />
      </g>
      <g fill="#0a80ff" stroke="#6d7780">
        <path d="M529.500 812.500h10v10h-10zM1037.500 611.500h10v10h-10z" />
      </g>

      {ARROWS.map((r) => (
        <g key={`${r.x}-${r.y}`} transform={`translate(${r.x} ${r.y}) rotate(${r.a})`} fill={r.dim ? '#646464' : '#fff'} stroke={r.dim ? '#646464' : '#fff'}>
          <path d="M0 0h16" strokeWidth="1.400" /><path d="M16 -3.500L33 0L16 3.500z" stroke="none" />
        </g>
      ))}

      <g stroke="#fff" strokeWidth="1">
        <path d="M860 638.500h45M912 638.500h45M908.500 590v45M908.500 642v45M905.500 635.500h6v6h-6z" strokeWidth="1.200" />
        <path d="M366.500 1056v50M366.500 1106.500h50M362.500 1101.500h9v9h-9z" />
        <path d="M368 1039l6.500 6l6.500-6M374.500 1045v7M421 1092l13 12M434 1092l-13 12" />
      </g>
    </svg>
  )
}

function ViewCube() {
  return (
    <svg viewBox="0 0 130 186" className="absolute right-[18px] top-[40px] w-[130px] h-[186px]">
      <circle cx="64.700" cy="66" r="53.500" fill="none" stroke="#42484f" strokeWidth="13" />
      <g fontFamily="Liberation Sans, sans-serif" fontWeight="700" fontSize="20" fill="#b0b2b4" textAnchor="middle">
        <text x="65" y="18">N</text><text x="65" y="130">S</text><text x="10" y="73">W</text><text x="121" y="73">E</text>
      </g>
      <path d="M39 40h52v52H39z" fill="#b1b4b6" /><path d="M49 50h32v32H49z" fill="#a0a5af" />
      <text x="65" y="70.500" textAnchor="middle" fontSize="12" fontWeight="700" fill="#4a525c" fontFamily="Open Sans, sans-serif">TOP</text>
      <rect x="41.500" y="153.500" width="47" height="17" rx="4" fill="#8b8f9d" stroke="#a4a8b4" />
      <text x="45" y="165" fontSize="10" fill="#5a6070" fontFamily="Liberation Sans, sans-serif">WCS</text>
      <path d="M76 159h7l-3.500 4z" fill="none" stroke="#b9bdc8" />
    </svg>
  )
}

function NavBar() {
  return (
    <div className="absolute right-1 top-[236px] w-8 h-[212px] rounded bg-[#9da1a6]/55 border border-[#8a8e93]/50">
      <svg viewBox="0 0 32 212" className="w-full h-full" fill="none" stroke="#454c55" strokeWidth="1.200">
        <circle cx="26" cy="5" r="3.500" fill="#50565e" /><path d="M24.500 3.500l3 3M27.500 3.500l-3 3" stroke="#8a8e93" />
        <path d="M16 19h11v11a11 11 0 1 1-11-11z" /><circle cx="16" cy="30" r="6" /><path d="M8 38l4-4M24 38l-4-4" />
        <path d="M13 49h6l-3 3zM13 119h6l-3 3zM13 157h6l-3 3z" fill="#454c55" stroke="none" />
        <path d="M3 56.500h26M3 164.500h26" stroke="#74797f" />
        <path d="M11 83c-2-4-5-7-7-10 2-2 5 2 6 3L8 66c2-2 3 1 4 7V63c2-2 3 0 4 9l1-10c2-1 3 1 2 11l3-8c2 0 2 2 0 10l3-2c2 0-1 6-5 10z" fill="#5c646e" />
        <path d="M5 90l14 14M19 90L5 104M4 94v-5h5M15 89h5v5M4 100v5h5" strokeWidth="1.800" />
        <circle cx="21" cy="104" r="5" fill="#6d7278" /><path d="M24 108l4 4" strokeWidth="2.500" />
        <path d="M16 128v20M12 132l4-5 4 5M14 132v14h4v-14" /><ellipse cx="17" cy="140" rx="11" ry="4" /><path d="M11 141l-4 4" />
        <path d="M4.500 169.500h5v6h-5zM12.500 169.500h5v6h-5zM20.500 169.500h6v6h-6zM4.500 178.500h16v13h-16z" /><path d="M10 181l6 4-6 4z" fill="#454c55" />
        <circle cx="26" cy="206" r="3.500" /><path d="M24 206h4" />
      </svg>
    </div>
  )
}

function Viewport() {
  return (
    <main className="relative flex-1 min-w-0 bg-[#212830] ml-1 my-1 overflow-hidden">
      <Drawing />
      <div className="absolute left-[3px] top-[6px] text-[#e4e4e4] flex gap-px whitespace-nowrap">
        <button type="button">[−]</button><button type="button">[Top]</button><button type="button">[2D Wireframe]</button>
      </div>
      <div className="absolute right-[10px] top-[9px] flex items-center gap-[10px] text-[#f0f0f0]">
        <span className="w-[10px] h-[3px] bg-white mt-1" />
        <svg viewBox="0 0 10 10" className="w-[10px] h-[10px]" fill="none" stroke="#f0f0f0"><path d="M1 3.500h6V9H1z" strokeWidth="2" /><path d="M3 .5h6.500V7" /></svg>
        <X size={12} strokeWidth={4.500} />
      </div>
      <ViewCube />
      <NavBar />
      <div className="absolute left-[79px] right-[81px] bottom-0 h-[27px] flex items-center text-[#c4c4c4]">
        <div className="flex items-center h-full w-[58px] bg-[#2a303b]/80">
          <svg viewBox="0 0 5 18" className="w-[5px] h-[18px] ml-1" fill="#b5b5b5">
            {[0, 3, 6, 9, 12, 15].map((y) => <path key={y} d={`M0 ${y}h2v2H0zM3 ${y}h2v2H3z`} />)}
          </svg>
          <button type="button" aria-label="Close command line" className="ml-[5px] w-[13px]"><X size={13} strokeWidth={3.500} /></button>
          <button type="button" aria-label="Customize" className="ml-[9px] w-[15px]"><Wrench size={15} fill="#c4c4c4" strokeWidth={1.500} /></button>
        </div>
        <div className="flex-1 h-[25px] rounded-sm bg-white/70 flex items-center pl-1 pr-[3px] text-[#555]">
          <svg viewBox="0 0 16 12" className="w-4 h-3" fill="none" stroke="#555"><path d="M.5.5h15v11H.5z" /><path d="M0 1.500h16" strokeWidth="2" /><path d="M2 5l3 2-3 2M6 9.500h4" /></svg>
          <Caret className="w-2 h-1 ml-[2px]" />
          <input aria-label="Command" placeholder="Type a command" className="flex-1 ml-2 bg-transparent outline-none italic text-[12px] placeholder:text-[#6a6a6a] font-['Liberation_Mono',monospace]" />
          <Caret className="w-[6px] h-[3px] rotate-180" />
        </div>
      </div>
    </main>
  )
}

/* ---------- Status bar ---------- */

function StatusGroup({ className = '', children }) {
  return <div className={`h-[23px] bg-[#3b4453] flex items-center flex-shrink-0 ${className}`}>{children}</div>
}

function StatusButton({ label, className = 'w-6', on, children }) {
  return (
    <button type="button" aria-label={label} aria-pressed={!!on} className={`h-[21px] flex items-center justify-center ${on ? 'bg-[#5b8bc4]' : ''} ${className}`}>
      <svg viewBox="0 0 16 16" className="w-4 h-4" fill="none" stroke="#e0e0e0" strokeWidth="1.200">{children}</svg>
    </button>
  )
}

const PERSON = <path d="M8 1l2 5-1 1 4 8-2-1-3-4-3 4-2 1 4-8-1-1z" fill="#e8e8e8" strokeWidth=".8" />

function StatusBar() {
  return (
    <footer className="h-[29px] flex items-start justify-between text-[#f0f0f0]">
      <div className="flex items-center h-6">
        <button type="button" aria-label="Layouts" className="ml-[13px]"><Menu size={21} strokeWidth={2.500} /></button>
        <button type="button" className="ml-[7px] w-[69px] h-6 bg-[#3b4453] font-bold text-white [clip-path:polygon(9px_0,100%_0,calc(100%_-_9px)_100%,0_100%)]">Model</button>
        <button type="button" className="ml-[7px] w-[54px] text-left">Layout1</button>
        <Slash />
        <button type="button" className="ml-3 w-[54px] text-left">Layout2</button>
        <Slash />
        <button type="button" aria-label="New layout" className="ml-[10px]"><Plus size={20} strokeWidth={2.500} /></button>
        <span className="ml-3 flex"><Slash /></span>
      </div>

      <div className="flex items-center gap-[3px] pt-[2px] pr-[3px]">
        <StatusGroup className="w-[47px] justify-center"><button type="button">MODEL</button></StatusGroup>
        <StatusGroup className="w-16">
          <StatusButton label="Grid"><path d="M4.500 0v16M8 0v16M11.500 0v16M0 4.500h16M0 8h16M0 11.500h16" strokeWidth="1.100" /></StatusButton>
          <StatusButton label="Snap"><path d="M2 3h13M2 8h13M2 13h13" strokeDasharray="2 3" strokeWidth="2" /></StatusButton>
          <Caret className="w-2 h-1 ml-1" />
        </StatusGroup>
        <StatusGroup className="w-[104px]">
          <StatusButton label="Ortho"><path d="M1.500 0v14.500H16M1.500 9h5v5.500" strokeWidth="1.400" /></StatusButton>
          <StatusButton label="Polar"><path d="M13 8a6 6 0 1 1-4-5.500M8 8h8M8 9l6-8" strokeWidth="1.400" /></StatusButton>
          <Caret className="w-2 h-1 mx-[2px]" />
          <StatusButton label="Isodraft" className="w-7"><path d="M8 0v16" stroke="#5fae7c" /><path d="M1 1l13 14" stroke="#c8606a" /><path d="M6.500 6.500h3v3h-3z" fill="#fff" stroke="none" /></StatusButton>
          <Caret className="w-2 h-1" />
        </StatusGroup>
        <StatusGroup className="w-[63px] -ml-[2px]">
          <StatusButton label="Object tracking"><path d="M13 2L2 14h14" strokeWidth="1.400" /><path d="M6 8h3v3H6z" fill="#e0e0e0" stroke="none" /></StatusButton>
          <StatusButton label="Object snap" on className="w-[22px]"><path d="M1 1h4v4H1zM7 2.500h7.500v12h-12V7" strokeWidth="1.400" /></StatusButton>
          <Caret className="w-2 h-1 ml-[6px]" />
        </StatusGroup>
        <StatusGroup className="w-[23px] justify-center -ml-px"><MapPin size={17} fill="#e0e0e0" stroke="#3b4453" strokeWidth={1} /></StatusGroup>
        <StatusGroup className="w-[119px] pl-1 -ml-px">
          <StatusButton label="Coordinate system"><circle cx="8" cy="8" r="7.500" /><path d="M2 4c3-2 6-3 6 0S5 8 7 10s-1 4-1 4M10 2l4 3-4 3 4 4" fill="#e0e0e0" /></StatusButton>
          <button type="button" className="ml-px">Netherlands-RD</button>
        </StatusGroup>
        <StatusGroup className="w-[138px]">
          <StatusButton label="Annotation visibility" on className="w-[23px]">{PERSON}<circle cx="13.500" cy="3" r="2" /></StatusButton>
          <StatusButton label="Auto scale" on className="w-[22px] ml-[2px]">{PERSON}<path d="M14 0l-3 4h4l-3 3" /></StatusButton>
          <StatusButton label="Annotation scale" className="w-[26px]">{PERSON}</StatusButton>
          <button type="button" className="ml-1 w-[53px] text-left">M_1:200</button>
          <Caret className="w-2 h-1" />
        </StatusGroup>
        <StatusGroup className="w-10 pl-1">
          <button type="button" aria-label="Workspace" className="w-[25px]"><Settings size={17} fill="#e0e0e0" stroke="#e0e0e0" strokeWidth={1.500} className="[&>circle]:fill-[#3b4453]" /></button>
          <Caret className="w-2 h-1" />
        </StatusGroup>
        <StatusGroup className="-ml-[2px]"><StatusButton label="Monitor" className="w-[23px]"><path d="M8 0v16M0 8h16" strokeWidth="2.200" /></StatusButton></StatusGroup>
        <StatusGroup><StatusButton label="Isolate" className="w-[23px]"><path d="M1 1h6v6H1zM5 15l3-5 3 5z" /><circle cx="12" cy="7" r="2.500" /></StatusButton></StatusGroup>
        <StatusGroup><StatusButton label="Graphics performance" className="w-[23px]"><path d="M2 0h11v14H2z" fill="#e0e0e0" /><path d="M13 1h2v13M0 15h10" /><path d="M9 2L5 8h3l-2 5 5-7H8z" fill="#f08a1d" stroke="none" /></StatusButton></StatusGroup>
        <StatusGroup><StatusButton label="Clean screen" className="w-[23px]"><path d="M.5 2.500h15v11H.5zM9.500 5h4v3M13 5l-4 3M6.500 11.500h-4v-3M3 11l4-3" /></StatusButton></StatusGroup>
        <StatusGroup><StatusButton label="Customization" className="w-[23px]"><path d="M0 2h16M0 8h16M0 14h16" strokeWidth="2" /></StatusButton></StatusGroup>
      </div>
    </footer>
  )
}

export default function App() {
  return (
    <div className="min-h-screen flex flex-col bg-[#222933] text-[11px] font-['Open_Sans','Noto_Sans',sans-serif] overflow-hidden">
      <TitleBar />
      <RibbonTabs />
      <Ribbon />
      <FileTabs />
      <div className="flex-1 flex bg-[#3b4453]">
        <PropertiesPalette />
        <Viewport />
        <DropletPalette />
        <InfraCadPalette />
      </div>
      <StatusBar />
    </div>
  )
}
